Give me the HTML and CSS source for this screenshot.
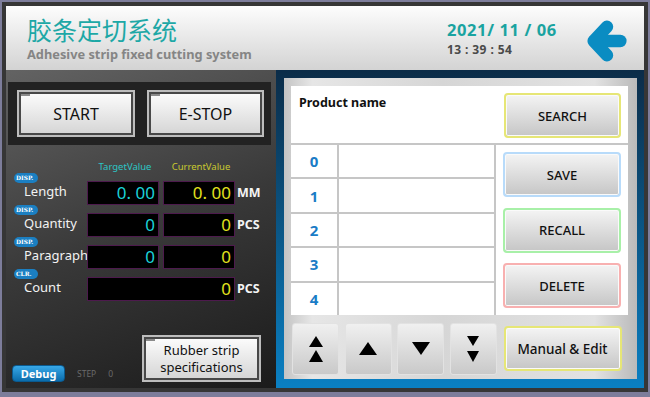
FILE: index.html
```html
<!DOCTYPE html>
<html lang="zh-CN">

<head>
    <meta charset="UTF-8">
    <meta name="viewport" content="width=device-width, initial-scale=1.0">
    <title>胶条定切系统</title>
    <link rel="stylesheet" href="styles.css">
</head>

<body>
    <div class="frame">
        <div class="screen">
            <!-- 顶部标题栏 -->
            <header class="top">
                <div class="brand">
                    <h1 class="title">胶条定切系统</h1>
                    <p class="subtitle">Adhesive strip fixed cutting system</p>
                </div>
                <div class="clock">
                    <div class="date">2021/ 11 / 06</div>
                    <div class="time">13 : 39 : 54</div>
                </div>
                <span class="back">
                    <svg viewBox="0 0 44 44" width="42" height="44"><g fill="none" stroke="#0a8cc2" stroke-width="13" stroke-linecap="round" stroke-linejoin="round"><path d="M9 22H36"/><path d="M22 7 8 22 22 37"/></g></svg>
                </span>
            </header>

            <div class="main">
                <!-- 左侧控制区 -->
                <section class="left">
                    <div class="ctrl">
                        <button class="hmi-btn">START</button>
                        <button class="hmi-btn">E-STOP</button>
                    </div>
                    <div class="heads">
                        <span></span>
                        <span class="h-target">TargetValue</span>
                        <span class="h-current">CurrentValue</span>
                    </div>
                    <div class="rows">
                        <div class="row">
                            <div class="name"><span class="tag">DISP.</span><span class="lbl">Length</span></div>
                            <div class="fld cyan">0. 00</div>
                            <div class="fld yellow">0. 00</div>
                            <span class="unit">MM</span>
                        </div>
                        <div class="row">
                            <div class="name"><span class="tag">DISP.</span><span class="lbl">Quantity</span></div>
                            <div class="fld cyan">0</div>
                            <div class="fld yellow">0</div>
                            <span class="unit">PCS</span>
                        </div>
                        <div class="row">
                            <div class="name"><span class="tag">DISP.</span><span class="lbl">Paragraph</span></div>
                            <div class="fld cyan">0</div>
                            <div class="fld yellow">0</div>
                            <span class="unit"></span>
                        </div>
                        <div class="row">
                            <div class="name"><span class="tag">CLR.</span><span class="lbl">Count</span></div>
                            <div class="fld yellow wide">0</div>
                            <span class="unit">PCS</span>
                        </div>
                    </div>
                    <div class="foot">
                        <button class="debug">Debug</button>
                        <span class="step">STEP</span>
                        <span class="step">0</span>
                        <button class="hmi-btn spec">Rubber strip<br>specifications</button>
                    </div>
                </section>

                <!-- 右侧配方区 -->
                <section class="right">
                    <div class="panel">
                        <div class="sheet">
                            <div class="product">
                                <span class="pname">Product name</span>
                                <button class="key k-yellow">SEARCH</button>
                            </div>
                            <div class="table">
                                <div class="idx">0</div><div class="cell"></div>
                                <div class="idx">1</div><div class="cell"></div>
                                <div class="idx">2</div><div class="cell"></div>
                                <div class="idx">3</div><div class="cell"></div>
                                <div class="idx">4</div><div class="cell"></div>
                                <div class="side">
                                    <button class="key k-blue">SAVE</button>
                                    <button class="key k-green">RECALL</button>
                                    <button class="key k-red">DELETE</button>
                                </div>
                            </div>
                        </div>
                        <div class="nav">
                            <button class="arrow"><svg viewBox="0 0 16 28" width="16" height="28"><polygon points="1,12 8,1 15,12"/><polygon points="1,27 8,15 15,27"/></svg></button>
                            <button class="arrow"><svg viewBox="0 0 18 13" width="18" height="13"><polygon points="0,13 9,0 18,13"/></svg></button>
                            <button class="arrow"><svg viewBox="0 0 18 13" width="18" height="13"><polygon points="0,0 18,0 9,13"/></svg></button>
                            <button class="arrow"><svg viewBox="0 0 16 28" width="16" height="28"><polygon points="2,1 14,1 8,11"/><polygon points="2,16 14,16 8,27"/></svg></button>
                            <button class="key k-yellow manual">Manual &amp; Edit</button>
                        </div>
                    </div>
                </section>
            </div>
        </div>
    </div>
</body>

</html>
```

FILE: styles.css
```css
* {
    margin: 0;
    padding: 0;
    box-sizing: border-box;
}

body {
    width: 650px;
    height: 397px;
    overflow: hidden;
    font-family: "Noto Sans", "Liberation Sans", sans-serif;
}

button {
    font-family: inherit;
    color: #111;
    cursor: pointer;
}

/* 外框 */
.frame {
    width: 650px;
    height: 397px;
    padding: 2px 2px 5px;
    background: #7d7d9b;
}

.screen {
    display: flex;
    flex-direction: column;
    height: 100%;
    border: 4px solid #363636;
}

/* 标题栏 */
.top {
    display: flex;
    align-items: flex-start;
    height: 64px;
    padding: 0 16px 0 21px;
    background: linear-gradient(to bottom, #fdfdfd, #d3d3d3);
}

.brand {
    padding-top: 8px;
}

.title {
    font: 400 25px/30px "Noto Sans CJK SC", sans-serif;
    color: #1ea8a6;
}

.subtitle {
    margin-top: 3px;
    font-size: 12.8px;
    line-height: 15px;
    font-weight: 700;
    color: #858585;
}

.clock {
    width: 110px;
    margin: 14px 29px 0 auto;
    white-space: nowrap;
}

.date {
    font-size: 16.5px;
    line-height: 20px;
    font-weight: 700;
    letter-spacing: 0.6px;
    color: #1aa3a0;
}

.time {
    margin-top: 3px;
    font-size: 12px;
    line-height: 14px;
    font-weight: 700;
    letter-spacing: 0.4px;
    color: #4a4a4a;
}

.back {
    display: flex;
    margin-top: 13px;
}

.main {
    display: flex;
    flex: 1;
}

/* 左侧 */
.left {
    display: flex;
    flex-direction: column;
    width: 270px;
    padding: 0 5px 6px 2px;
    background: linear-gradient(160deg, #636363 0%, #393939 50%, #1b1b1b 100%);
}

.ctrl {
    display: flex;
    gap: 12px;
    height: 63px;
    margin-top: 12px;
    padding: 8px 7px 8px 9px;
    background: #222;
}

.hmi-btn {
    position: relative;
    width: 118px;
    height: 47px;
    border: 2px solid #bdbdbd;
    box-shadow: inset 0 0 0 2px #484848;
    background: linear-gradient(to bottom, #fdfdfd, #d4d4d4);
    font-size: 16px;
}

.hmi-btn::before {
    content: "";
    position: absolute;
    left: 2px;
    top: 2px;
    width: 9px;
    height: 2px;
    background: #8a8a8a;
}

.ctrl .hmi-btn:last-child {
    width: 117px;
}

.heads {
    display: grid;
    grid-template-columns: 69px 72px 72px;
    column-gap: 4px;
    margin: 16px 0 0 8px;
    font-size: 9.5px;
    line-height: 12px;
    text-align: center;
}

.h-target {
    color: #2cc6c6;
}

.h-current {
    color: #c9c930;
}

.rows {
    display: flex;
    flex-direction: column;
    gap: 8px;
    margin: 8px 0 0 6px;
}

.row {
    display: grid;
    grid-template-columns: 69px 72px 72px auto;
    column-gap: 4px;
    height: 24px;
}

.name {
    display: flex;
    flex-direction: column;
    align-items: flex-start;
    margin-top: -8px;
    white-space: nowrap;
}

.tag {
    width: 24px;
    height: 10px;
    padding-left: 2px;
    border-radius: 5px;
    background: #1b7fc2;
    color: #fff;
    font: 700 5.8px/10px "DejaVu Serif", serif;
}

.lbl {
    margin-left: 10px;
    font-size: 13px;
    line-height: 16px;
    color: #f2f2f2;
}

.fld {
    padding-right: 3px;
    border: 1px solid #4d1a4d;
    background: #000;
    font-size: 17px;
    line-height: 22px;
    text-align: right;
}

.fld.wide {
    grid-column: 2 / 4;
}

.cyan {
    color: #1bd2d8;
}

.yellow {
    color: #e2e21e;
}

.unit {
    margin-left: -2px;
    font-size: 12.5px;
    line-height: 24px;
    font-weight: 700;
    color: #f4f4f4;
}

.foot {
    display: flex;
    align-items: flex-end;
    margin-top: auto;
}

.debug {
    width: 53px;
    height: 17px;
    margin-left: 4px;
    border: 1px solid #0a5a90;
    border-radius: 4px;
    background: linear-gradient(to bottom, #38a8e8, #0b6cab);
    color: #fff;
    font-size: 11px;
    font-weight: 700;
}

.step {
    margin-left: 12px;
    font-size: 8.5px;
    line-height: 17px;
    color: #6a6a6a;
}

.hmi-btn.spec {
    width: 119px;
    margin: 0 10px 0 auto;
    font-size: 13px;
    line-height: 17px;
}

/* 右侧 */
.right {
    flex: 1;
    padding: 8px 7px 9px 8px;
    background: linear-gradient(to bottom, #0b2c48, #0a80c3);
}

.panel {
    display: flex;
    flex-direction: column;
    height: 100%;
    padding: 8px 9px 0 7px;
    background: linear-gradient(to right, #c4c4c4, #e6e6e6 8%, #d6d6d6 45%, #e2e2e2 88%, #bababa);
}

.sheet {
    display: flex;
    flex-direction: column;
    gap: 2px;
    background: #c6c6c6;
}

.product {
    display: flex;
    justify-content: space-between;
    height: 57px;
    padding: 7px 7px 0 8px;
    background: #fff;
}

.pname {
    margin-top: 2px;
    font-size: 12.5px;
    line-height: 15px;
    font-weight: 700;
    color: #111;
}

.key {
    width: 117px;
    height: 45px;
    border: 2px solid;
    border-radius: 4px;
    box-shadow: inset 0 0 0 1px #fafafa;
    background: linear-gradient(to bottom, #f4f4f4, #c6c6c6);
    font-size: 13px;
    font-weight: 500;
}

.k-yellow {
    border-color: #e6e676;
}

.k-blue {
    border-color: #b8dbfa;
}

.k-green {
    border-color: #a8f0a8;
}

.k-red {
    border-color: #f8b0b0;
}

.table {
    display: grid;
    grid-template-columns: 46px 155px 132px;
    grid-template-rows: repeat(5, 32.4px);
    gap: 2px;
}

.idx {
    display: flex;
    justify-content: center;
    align-items: center;
    background: #fff;
    font-size: 15px;
    font-weight: 700;
    color: #1a7cc6;
}

.cell {
    background: #fff;
}

.side {
    display: flex;
    flex-direction: column;
    gap: 10.5px;
    grid-column: 3;
    grid-row: 1 / -1;
    padding: 7px 7px 0;
    background: #fff;
}

.side .key {
    width: 118px;
}

.nav {
    display: flex;
    align-items: center;
    gap: 5.5px;
    margin-top: 8px;
    padding-left: 1px;
}

.arrow {
    display: flex;
    justify-content: center;
    align-items: center;
    width: 47px;
    height: 52px;
    border: 1px solid #e2e2e2;
    border-radius: 3px;
    background: linear-gradient(to bottom, #f0f0f0, #c9c9c9);
}

.arrow svg {
    fill: #000;
}

.key.manual {
    width: 118px;
    margin-left: 1.5px;
    font-size: 13.5px;
}
```
